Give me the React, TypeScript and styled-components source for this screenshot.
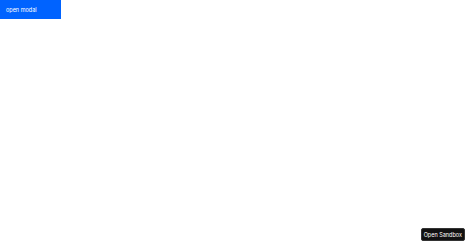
import styled, { createGlobalStyle } from "styled-components";

const GlobalStyle = createGlobalStyle`
  html, body {
    margin: 0;
    padding: 0;
    background: #fff;
    font-family: Inter, "Liberation Sans", sans-serif;
  }
`;

const Page = styled.div`
  position: relative;
  width: 474px;
  height: 248px;
  overflow: hidden;
`;

const OpenModalButton = styled.button`
  display: flex;
  align-items: center;
  width: 61px;
  height: 19px;
  padding: 0 0 0 6px;
  margin: 0;
  border: none;
  background: #0063ff;
  color: #fff;
  font-family: Inter, "Liberation Sans", sans-serif;
  font-size: 5.5px;
  cursor: pointer;
`;

const SandboxButton = styled.button`
  position: absolute;
  right: 9px;
  bottom: 7px;
  height: 13px;
  padding: 0 2px;
  border: 1px solid #333;
  border-radius: 2px;
  background: #111;
  color: #fff;
  font-family: Inter, "Liberation Sans", sans-serif;
  font-size: 5.5px;
  cursor: pointer;
`;

export default function App() {
  return (
    <Page>
      <GlobalStyle />
      <OpenModalButton>open modal</OpenModalButton>
      <SandboxButton>Open Sandbox</SandboxButton>
    </Page>
  );
}
